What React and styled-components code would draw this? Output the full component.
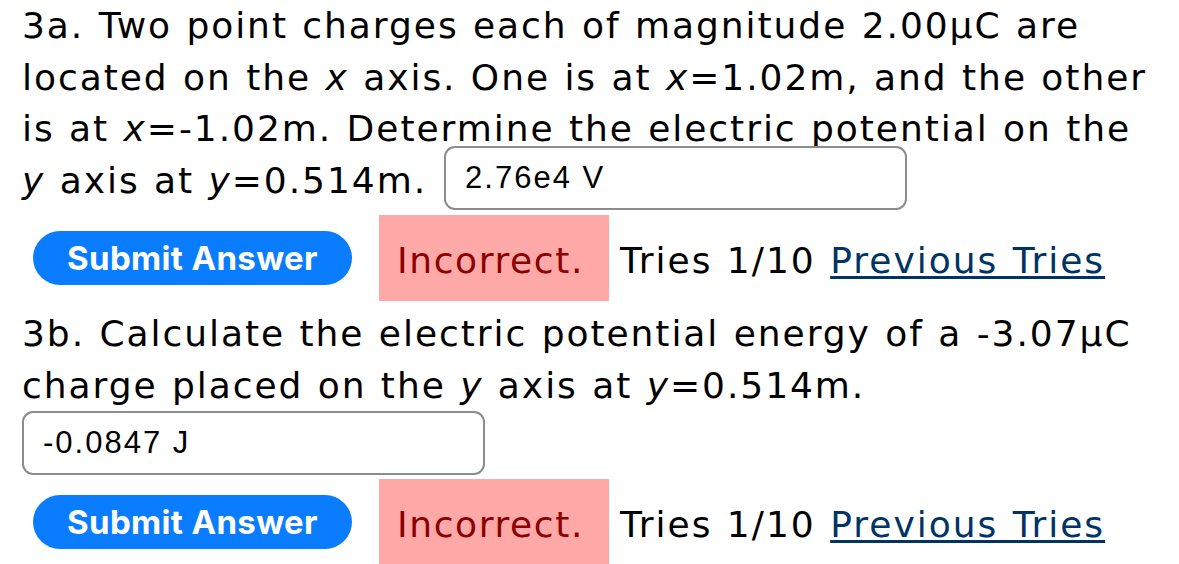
import React from "react";
import styled, { createGlobalStyle } from "styled-components";

const Global = createGlobalStyle`
  html, body { margin: 0; padding: 0; background: #fff; }
  body { font-family: "DejaVu Sans", Verdana, sans-serif; color: #000; }
`;

const Page = styled.div`
  padding: 0 22px;
  font-size: 36px;
  line-height: 51.5px;
  letter-spacing: 1.95px;
  word-spacing: 1px;
`;

const Question = styled.p`
  margin: 0;
  padding-top: ${(p) => p.$top || 0}px;
`;

const Var = styled.i`
  font-style: italic;
`;

const AnswerInput = styled.input`
  box-sizing: border-box;
  width: 463px;
  height: 64px;
  border: 2px solid #8c8c8e;
  border-radius: 11px;
  padding: 0 19px;
  font-family: "Liberation Sans", Arial, sans-serif;
  font-size: 31px;
  letter-spacing: 2px;
  word-spacing: 0;
  color: #000;
  background: #fff;
  vertical-align: ${(p) => (p.$inline ? "5px" : "baseline")};
  margin: ${(p) => (p.$inline ? "-14px 0 -12px 17px" : "0")};
  display: ${(p) => (p.$inline ? "inline-block" : "block")};
  outline: none;
`;

const SubmitRow = styled.div`
  display: flex;
  align-items: center;
  height: 86px;
  margin-top: ${(p) => p.$mt}px;
`;

const SubmitButton = styled.button`
  box-sizing: border-box;
  width: 319px;
  height: 54px;
  margin-left: 11px;
  border: none;
  border-radius: 27px;
  background: #0a7cff;
  color: #fff;
  font-family: Inter, Roboto, "Liberation Sans", Arial, sans-serif;
  font-weight: 700;
  font-size: 33px;
  letter-spacing: 0.35px;
  word-spacing: 0;
  padding: 0;
  cursor: pointer;
`;

const Incorrect = styled.div`
  box-sizing: border-box;
  height: 86px;
  width: 230px;
  margin-left: 27px;
  background: #ffa8a8;
  color: #8b0000;
  display: flex;
  align-items: center;
  padding-left: 18px;
  padding-top: 6px;
  letter-spacing: 1.6px;
`;

const Tries = styled.span`
  margin-left: 11px;
  padding-top: 6px;
  white-space: nowrap;
  letter-spacing: 2px;
`;

const PrevLink = styled.a`
  color: #003366;
  text-decoration: underline;
  text-decoration-thickness: 3px;
  text-underline-offset: 3px;
`;

function Attempt({ mt }) {
  return (
    <SubmitRow $mt={mt}>
      <SubmitButton>Submit Answer</SubmitButton>
      <Incorrect>Incorrect.</Incorrect>
      <Tries>
        Tries 1/10 <PrevLink href="#">Previous Tries</PrevLink>
      </Tries>
    </SubmitRow>
  );
}

export default function App() {
  return (
    <>
      <Global />
      <Page>
        <Question $top={0}>
          3a. Two point charges each of magnitude 2.00µC are located on the <Var>x</Var> axis.
          One is at <Var>x</Var>=1.02m, and the other is at <Var>x</Var>=-1.02m. Determine the
          electric potential on the <Var>y</Var> axis at <Var>y</Var>=0.514m.
          <AnswerInput $inline defaultValue="2.76e4 V" />
        </Question>
        <Attempt mt={9} />
        <Question $top={7}>
          3b. Calculate the electric potential energy of a -3.07µC charge placed on the{" "}
          <Var>y</Var> axis at <Var>y</Var>=0.514m.
        </Question>
        <AnswerInput defaultValue="-0.0847 J" />
        <Attempt mt={4} />
      </Page>
    </>
  );
}
